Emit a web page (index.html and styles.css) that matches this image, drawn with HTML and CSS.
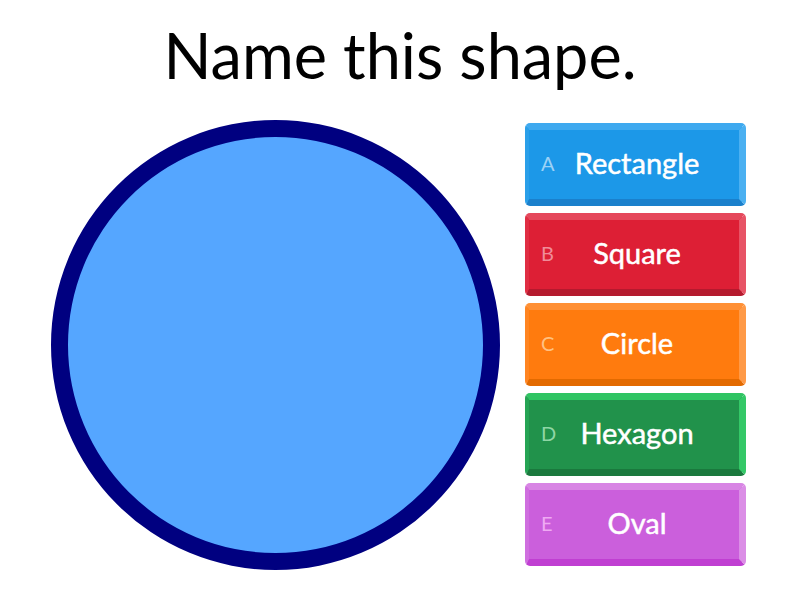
FILE: index.html
```html
<!DOCTYPE html>
<html>
<head>
<meta charset="utf-8">
<link rel="stylesheet" href="styles.css">
</head>
<body>
<h1 class="title">Name this shape.</h1>
<div class="stage">
  <div class="shape"></div>
  <div class="answers">
    <div class="btn btn-a"><span class="key">A</span><span class="label">Rectangle</span></div>
    <div class="btn btn-b"><span class="key">B</span><span class="label">Square</span></div>
    <div class="btn btn-c"><span class="key">C</span><span class="label">Circle</span></div>
    <div class="btn btn-d"><span class="key">D</span><span class="label">Hexagon</span></div>
    <div class="btn btn-e"><span class="key">E</span><span class="label">Oval</span></div>
  </div>
</div>
</body>
</html>
```
FILE: styles.css
```css
html, body {
  margin: 0;
  padding: 0;
  background: #ffffff;
  width: 800px;
  height: 600px;
  overflow: hidden;
  font-family: Lato, "Noto Sans", sans-serif;
}
.title {
  margin: 0;
  padding-top: 16px;
  font-size: 63px;
  line-height: 77px;
  font-weight: 400;
  text-align: center;
  color: #000;
}
.stage {
  display: flex;
  align-items: flex-start;
  padding-left: 51px;
}
.shape {
  margin-top: 27px;
  width: 449px;
  height: 450px;
  box-sizing: border-box;
  border: 17px solid #000080;
  border-radius: 50%;
  background: #55a6ff;
}
.answers {
  margin-top: 30px;
  margin-left: 25px;
  display: flex;
  flex-direction: column;
  gap: 7px;
}
.btn {
  position: relative;
  width: 221px;
  height: 83px;
  box-sizing: border-box;
  border-radius: 5px;
  border-style: solid;
  border-width: 7px 7px 7px 4px;
  display: flex;
  align-items: center;
  justify-content: center;
  color: #fff;
}
.label {
  font-size: 29px;
  font-weight: 400;
  -webkit-text-stroke: 0.5px #fff;
  padding-left: 6px;
  padding-bottom: 4px;
}
.key {
  position: absolute;
  left: 12px;
  top: 50%;
  transform: translateY(-58%);
  font-size: 20px;
}
.btn-a { background: #1c98e8; border-color: #3ea9ef #4bb0f1 #1a80cc #2a9fe9; }
.btn-a .key { color: #9dd2f6; }
.btn-b { background: #dd1f35; border-color: #e5485b #e75466 #b51a2e #e02e43; }
.btn-b .key { color: #f08c99; }
.btn-c { background: #ff7b0e; border-color: #ff9035 #ff9a47 #e36a00 #ff8522; }
.btn-c .key { color: #ffc182; }
.btn-d { background: #21924b; border-color: #2fc462 #34c867 #1a793d #25a454; }
.btn-d .key { color: #8fd6a5; }
.btn-e { background: #cb5fdc; border-color: #d885e4 #db8ee6 #c03fd2 #cf6fdf; }
.btn-e .key { color: #efaaf3; }
```
